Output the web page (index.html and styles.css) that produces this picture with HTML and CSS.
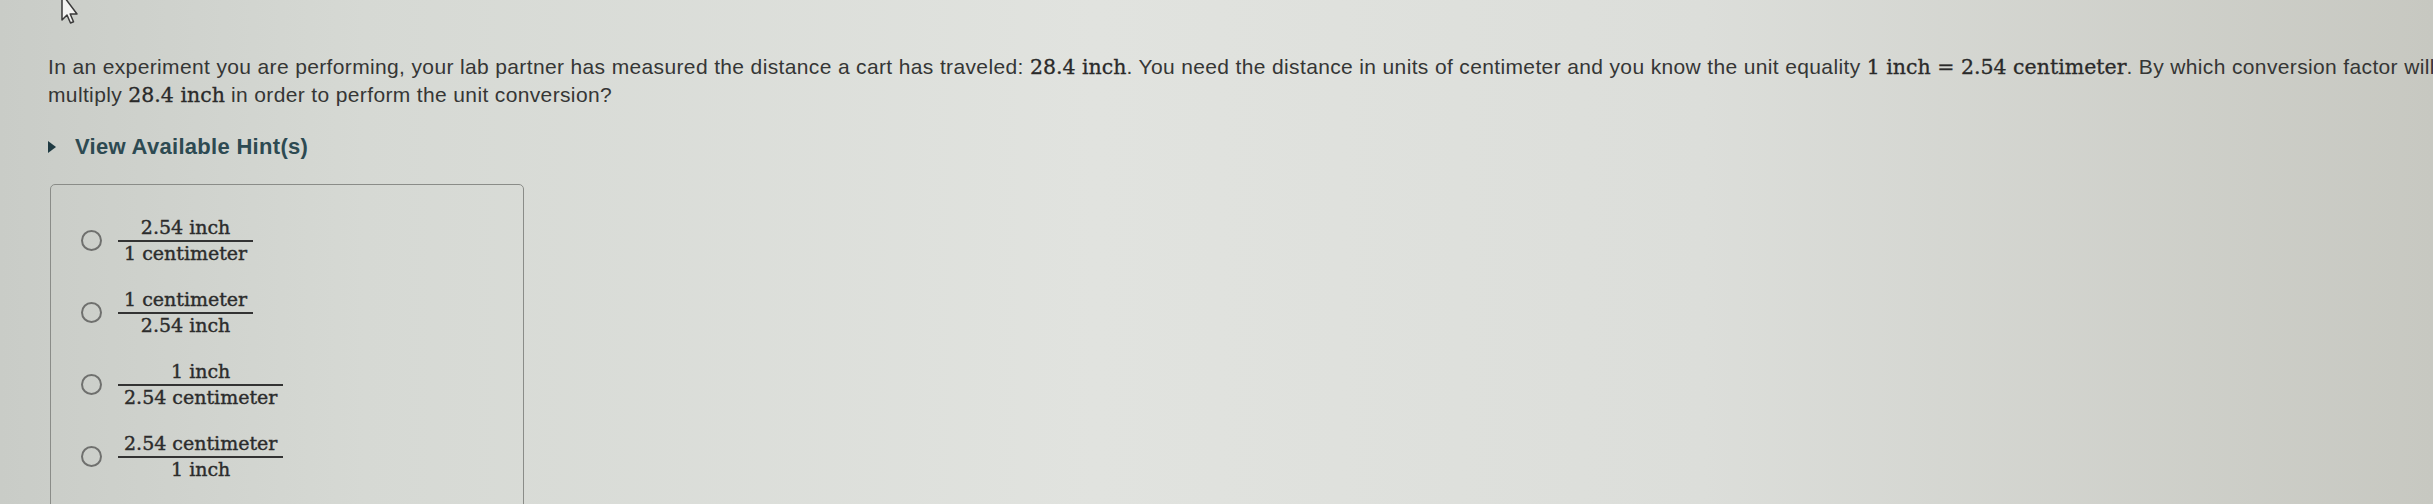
FILE: index.html
```html
<!DOCTYPE html>
<html lang="en">
<head>
<meta charset="utf-8">
<title>Unit conversion</title>
<link rel="stylesheet" href="styles.css">
</head>
<body>
<div class="page">
  <svg class="cursor" width="18" height="28" viewBox="0 0 18 28" aria-hidden="true">
    <path d="M2 -6 L2 20 L7 15 L10.5 23 L13.5 21.8 L10.2 14 L17 14 Z" fill="#f4f4f2" stroke="#3a3a3a" stroke-width="1.5" stroke-linejoin="round"/>
  </svg>
  <p class="question">In an experiment you are performing, your lab partner has measured the distance a cart has traveled: <span class="m">28.4 inch</span>. You need the distance in units of centimeter and you know the unit equality <span class="m">1 inch = 2.54 centimeter</span>. By which conversion factor will you multiply <span class="m">28.4 inch</span> in order to perform the unit conversion?</p>
  <div class="hint"><span class="tri"></span>View Available Hint(s)</div>
  <div class="choices">
    <label class="choice"><span class="radio"></span><span class="frac"><span class="num">2.54 inch</span><span class="den">1 centimeter</span></span></label>
    <label class="choice"><span class="radio"></span><span class="frac"><span class="num">1 centimeter</span><span class="den">2.54 inch</span></span></label>
    <label class="choice"><span class="radio"></span><span class="frac"><span class="num">1 inch</span><span class="den">2.54 centimeter</span></span></label>
    <label class="choice"><span class="radio"></span><span class="frac"><span class="num">2.54 centimeter</span><span class="den">1 inch</span></span></label>
  </div>
</div>
</body>
</html>
```

FILE: styles.css
```css
html, body {
  margin: 0;
  padding: 0;
  height: 100%;
  overflow: hidden;
}
body {
  background: linear-gradient(90deg, #c9ccc7 0%, #d6d9d4 15%, #e1e3df 45%, #dcdeda 70%, #c7c8c1 100%);
  font-family: "Liberation Sans", Arial, sans-serif;
  color: #353635;
}
.page {
  position: relative;
  width: 2560px;
  padding: 53px 0 0 48px;
  box-sizing: border-box;
}
.cursor {
  position: absolute;
  left: 60px;
  top: 0;
}
.question {
  margin: 0;
  font-size: 21px;
  letter-spacing: 0.36px;
  line-height: 27px;
  width: 2450px;
}
.m {
  font-family: "DejaVu Serif", "Liberation Serif", serif;
  font-size: 20.5px;
  letter-spacing: 0;
  color: #2a2a2a;
  -webkit-text-stroke: 0.3px #2a2a2a;
}
.hint {
  display: flex;
  align-items: center;
  margin-top: 25px;
  font-size: 22px;
  line-height: 25px;
  font-weight: bold;
  color: #2d4a52;
  letter-spacing: 0.3px;
}
.tri {
  width: 0;
  height: 0;
  border-top: 6px solid transparent;
  border-bottom: 6px solid transparent;
  border-left: 8px solid #1f3a42;
  margin-right: 19px;
}
.choices {
  margin: 25px 0 0 2px;
  width: 474px;
  height: 360px;
  border: 1.5px solid #8a8c88;
  border-radius: 5px;
  box-sizing: border-box;
  padding: 31px 0 0 30px;
  display: flex;
  flex-direction: column;
  gap: 24px;
}
.choice {
  display: flex;
  align-items: center;
  gap: 16px;
}
.radio {
  width: 17px;
  height: 17px;
  border: 2px solid #6f706e;
  border-radius: 50%;
  flex: none;
}
.frac {
  display: inline-flex;
  flex-direction: column;
  align-items: center;
  font-family: "DejaVu Serif", "Liberation Serif", serif;
  font-size: 19px;
  line-height: 22px;
  color: #2c2c2c;
  -webkit-text-stroke: 0.4px #2c2c2c;
}
.num {
  padding: 0 6px 2px;
  border-bottom: 2px solid #333;
  width: 100%;
  text-align: center;
  box-sizing: border-box;
}
.den {
  padding: 0 6px;
}
```
